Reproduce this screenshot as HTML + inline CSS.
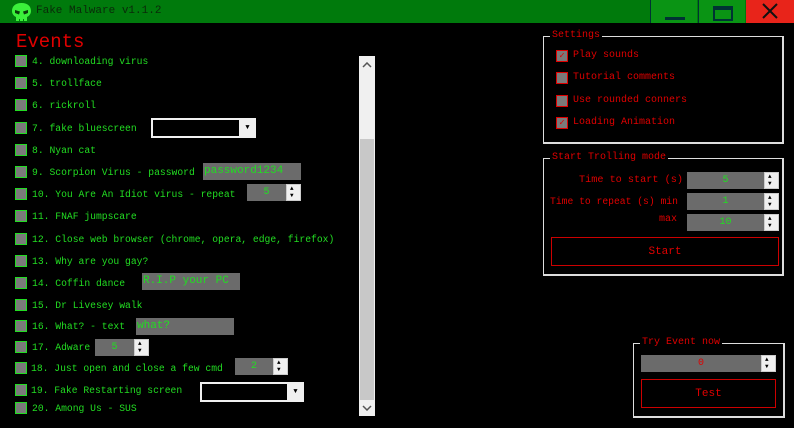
<!DOCTYPE html>
<html><head><meta charset="utf-8"><style>
*{margin:0;padding:0;box-sizing:border-box}
body{width:794px;height:428px;background:#000;position:relative;overflow:hidden;font-family:"Liberation Mono",monospace;font-size:9.7px;color:#22dd22}
.a{position:absolute;white-space:nowrap;line-height:14px;transform:translateY(1px)}
.cb{position:absolute;left:15px;width:12px;height:12px;background:#7a7a7a;border:1px solid #22dd22}
.r{color:#e00000}
.cr{position:absolute;width:12px;height:12px;background:#7a7a7a;border:1px solid #e00000;color:#e00000;font-size:9px;line-height:10px;text-align:center}
.box{position:absolute;background:#6b6b6b;color:#22dd22;line-height:17px;font-size:10px;height:17px}
.sp{position:absolute;right:0;top:0;width:15px;height:100%;background:#f0f0f0;border:1px solid #ccc}
.sp:before{content:"▲";position:absolute;top:0;left:3px;font-size:6px;color:#000;line-height:8px}
.sp:after{content:"▼";position:absolute;bottom:0;left:3px;font-size:6px;color:#000;line-height:8px}
.dd{position:absolute;background:#000;border:2px solid #f0f0f0;border-right:none;height:20px}
.dd b{position:absolute;right:0;top:-2px;width:17px;height:20px;background:#f0f0f0;font-size:7px;color:#000;text-align:center;line-height:20px;font-weight:normal}
fieldset{position:absolute;border:1px solid #ddd;border-right:2px solid #ddd;border-bottom:2px solid #ddd}
.lg{position:absolute;top:-8px;left:6px;background:#000;color:#e00000;padding:0 2px;line-height:14px}
.rl{font-size:10px}
</style></head><body>
<div style="position:absolute;left:0;top:0;width:794px;height:23px;background:#007a0c"></div>
<svg style="position:absolute;left:11px;top:3px" width="21" height="19" viewBox="0 0 21 19"><path d="M10.5 0C4 0 1 3.5 1 8c0 3 2 5 4 6v4h3v-2h1v2h3v-2h1v2h3v-4c2-1 4-3 4-6C20 3.5 17 0 10.5 0z" fill="#3bef3b"/><path d="M4 7l5 1.5-1 3-4-1.5zM17 7l-5 1.5 1 3 4-1.5z" fill="#0a3a0a"/></svg>
<div class="a" style="left:36px;top:3px;font-size:11px;color:#0a2a0a">Fake Malware v1.1.2</div>
<div style="position:absolute;left:650px;top:0;width:47px;height:23px;background:#0a9414;border-left:1px solid #033"></div>
<div style="position:absolute;left:665px;top:17px;width:20px;height:3px;background:#033"></div>
<div style="position:absolute;left:698px;top:0;width:47px;height:23px;background:#0a9414;border-left:1px solid #033"></div>
<div style="position:absolute;left:713px;top:6px;width:20px;height:15px;border:2px solid #033;border-top-width:4px"></div>
<div style="position:absolute;left:746px;top:0;width:48px;height:23px;background:#e8241a"></div>
<svg style="position:absolute;left:762px;top:3px" width="16" height="16"><path d="M1 1L15 15M15 1L1 15" stroke="#111" stroke-width="2"/></svg>

<div class="a r" style="left:16px;top:31px;font-size:19px;line-height:20px">Events</div>

<div class="cb" style="top:55px"></div><div class="a" style="left:32px;top:54px">4. downloading virus</div>
<div class="cb" style="top:77px"></div><div class="a" style="left:32px;top:76px">5. trollface</div>
<div class="cb" style="top:99px"></div><div class="a" style="left:32px;top:98px">6. rickroll</div>
<div class="cb" style="top:122px"></div><div class="a" style="left:32px;top:121px">7. fake bluescreen</div>
<div class="dd" style="left:151px;top:118px;width:105px"><b>▼</b></div>
<div class="cb" style="top:144px"></div><div class="a" style="left:32px;top:143px">8. Nyan cat</div>
<div class="cb" style="top:166px"></div><div class="a" style="left:32px;top:165px">9. Scorpion Virus - password</div>
<div class="box" style="left:203px;top:163px;width:98px;font-size:11px;padding-left:1px">password1234</div>
<div class="cb" style="top:188px"></div><div class="a" style="left:32px;top:187px">10. You Are An Idiot virus - repeat</div>
<div class="box" style="left:247px;top:184px;width:54px;text-align:center;padding-right:15px">5<div class="sp"></div></div>
<div class="cb" style="top:210px"></div><div class="a" style="left:32px;top:209px">11. FNAF jumpscare</div>
<div class="cb" style="top:233px"></div><div class="a" style="left:32px;top:232px">12. Close web browser (chrome, opera, edge, firefox)</div>
<div class="cb" style="top:255px"></div><div class="a" style="left:32px;top:254px">13. Why are you gay?</div>
<div class="cb" style="top:277px"></div><div class="a" style="left:32px;top:276px">14. Coffin dance</div>
<div class="box" style="left:142px;top:273px;width:98px;font-size:11px;padding-left:1px">R.I.P your PC</div>
<div class="cb" style="top:299px"></div><div class="a" style="left:32px;top:298px">15. Dr Livesey walk</div>
<div class="cb" style="top:320px"></div><div class="a" style="left:32px;top:319px">16. What? - text</div>
<div class="box" style="left:136px;top:318px;width:98px;font-size:11px;padding-left:1px">what?</div>
<div class="cb" style="top:341px"></div><div class="a" style="left:32px;top:340px">17. Adware</div>
<div class="box" style="left:95px;top:339px;width:54px;text-align:center;padding-right:15px">5<div class="sp"></div></div>
<div class="cb" style="top:362px"></div><div class="a" style="left:31px;top:361px">18. Just open and close a few cmd</div>
<div class="box" style="left:235px;top:358px;width:53px;text-align:center;padding-right:15px">2<div class="sp"></div></div>
<div class="cb" style="top:384px"></div><div class="a" style="left:31px;top:383px">19. Fake Restarting screen</div>
<div class="dd" style="left:200px;top:382px;width:104px"><b>▼</b></div>
<div class="cb" style="top:402px"></div><div class="a" style="left:32px;top:401px">20. Among Us - SUS</div>

<div style="position:absolute;left:359px;top:56px;width:16px;height:360px;background:#c8c8c8;border:1px solid #f0f0f0"></div>
<div style="position:absolute;left:359px;top:56px;width:16px;height:83px;background:#f0f0f0"></div>
<svg style="position:absolute;left:362px;top:62px" width="10" height="6"><path d="M1 5L5 1L9 5" stroke="#555" stroke-width="1.5" fill="none"/></svg>
<div style="position:absolute;left:359px;top:400px;width:16px;height:16px;background:#f0f0f0"></div>
<svg style="position:absolute;left:362px;top:405px" width="10" height="6"><path d="M1 1L5 5L9 1" stroke="#555" stroke-width="1.5" fill="none"/></svg>

<fieldset style="left:543px;top:36px;width:241px;height:108px"><div class="lg rl">Settings</div></fieldset>
<div class="cr" style="left:556px;top:50px">✓</div><div class="a r rl" style="left:573px;top:48px">Play sounds</div>
<div class="cr" style="left:556px;top:72px"></div><div class="a r rl" style="left:573px;top:70px">Tutorial comments</div>
<div class="cr" style="left:556px;top:95px"></div><div class="a r rl" style="left:573px;top:93px">Use rounded conners</div>
<div class="cr" style="left:556px;top:117px">✓</div><div class="a r rl" style="left:573px;top:115px">Loading Animation</div>

<fieldset style="left:543px;top:158px;width:241px;height:118px"><div class="lg rl">Start Trolling mode</div></fieldset>
<div class="a r" style="left:579px;top:173px;font-size:10.2px">Time to start (s)</div>
<div class="box" style="left:687px;top:172px;width:92px;text-align:center;padding-right:15px">5<div class="sp"></div></div>
<div class="a r" style="left:550px;top:194px;font-size:9.7px">Time to repeat (s) min</div>
<div class="box" style="left:687px;top:193px;width:92px;text-align:center;padding-right:15px">1<div class="sp"></div></div>
<div class="a r" style="left:659px;top:212px;font-size:10px">max</div>
<div class="box" style="left:687px;top:214px;width:92px;text-align:center;padding-right:15px">10<div class="sp"></div></div>
<div style="position:absolute;left:551px;top:237px;width:228px;height:29px;border:1px solid #c00;color:#e00000;text-align:center;line-height:29px;font-size:11px">Start</div>

<fieldset style="left:633px;top:343px;width:152px;height:75px"><div class="lg rl">Try Event now</div></fieldset>
<div class="box" style="left:641px;top:355px;width:135px;text-align:center;padding-right:15px;color:#e00000">0<div class="sp"></div></div>
<div style="position:absolute;left:641px;top:379px;width:135px;height:29px;border:1px solid #c00;color:#e00000;text-align:center;line-height:29px;font-size:11px">Test</div>
</body></html>
